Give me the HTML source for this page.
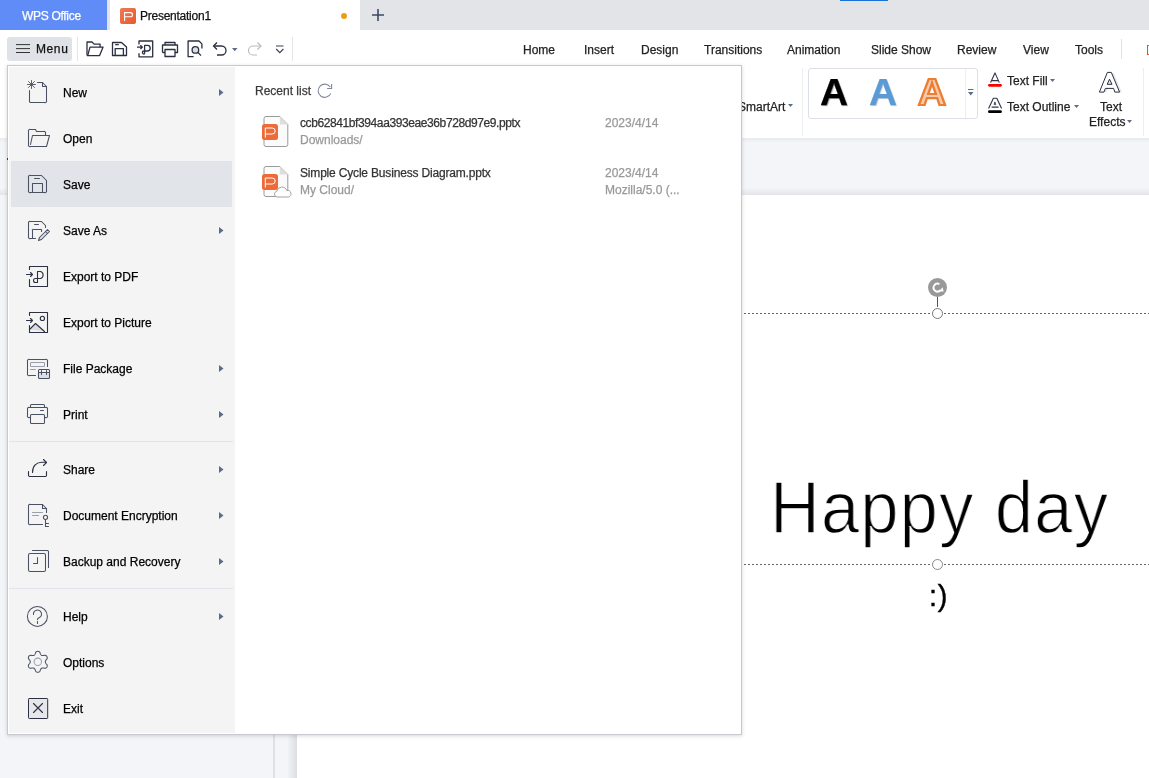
<!DOCTYPE html>
<html><head><meta charset="utf-8">
<style>
*{margin:0;padding:0;box-sizing:border-box}
html,body{width:1149px;height:778px;overflow:hidden;background:#f4f5f8;font-family:"Liberation Sans",sans-serif;font-size:12px;color:#222;position:relative}
.a{position:absolute}
.t{position:absolute;white-space:nowrap;line-height:14px;font-size:12px;will-change:transform;-webkit-text-stroke:0.25px currentColor}
svg{position:absolute;overflow:visible}
</style></head><body>
<!-- tab bar -->
<div class="a" style="left:0;top:0;width:1149px;height:30px;background:#e2e4e8"></div>
<div class="a" style="left:840px;top:0;width:48px;height:1px;background:#1a72d6"></div>
<div class="a" style="left:0;top:0;width:107px;height:30px;background:#608cf7"></div>
<div class="t" style="left:22px;top:9px;color:#fff;letter-spacing:-0.3px">WPS Office</div>
<div class="a" style="left:110px;top:0;width:250px;height:30px;background:#fff"></div>
<!-- P icon -->
<div class="a" style="left:120px;top:8px;width:16px;height:16px;background:linear-gradient(135deg,#f07a55,#e85a2c);border-radius:2px"></div>
<svg style="left:120px;top:8px" width="16" height="16"><path d="M4.6 13V4.6H10.4A2.1 2.1 0 0 1 10.4 8.8H4.6" fill="none" stroke="#fff" stroke-width="1.1"/></svg>
<div class="t" style="left:140px;top:9px;color:#111;letter-spacing:-0.25px">Presentation1</div>
<div class="a" style="left:341px;top:13px;width:6px;height:6px;border-radius:50%;background:#e8a014"></div>
<svg style="left:372px;top:9px" width="12" height="12"><path d="M6 0V12M0 6H12" stroke="#3d4a66" stroke-width="1.6"/></svg>

<!-- toolbar row -->
<div class="a" style="left:0;top:30px;width:1149px;height:108px;background:#fff"></div>


<!-- menu button -->
<div class="a" style="left:7px;top:37px;width:65px;height:24px;background:#dfe2e6;border-radius:3px"></div>
<svg style="left:16px;top:44px" width="14" height="9"><path d="M0 0.6H14M0 4.6H14M0 8.5H14" stroke="#333" stroke-width="1"/></svg>
<div class="t" style="left:36px;top:42px;color:#111;letter-spacing:0.6px">Menu</div>
<div class="a" style="left:77px;top:37px;width:1px;height:24px;background:#e3e5e9"></div>
<!-- quick icons -->
<svg style="left:80px;top:35px" width="220" height="30" viewBox="0 0 220 30" fill="none" stroke="#2b3040" stroke-width="1.3" stroke-linejoin="round">
 <!-- open -->
 <path d="M7 20.6V7H12L14.1 9.1H20.1V12.2"/>
 <path d="M7 20.6H19.6L23 12.2H10L7.7 20.6"/>
 <!-- save -->
 <path d="M32.5 7.5H41.5L46.5 12V20.5H32.5Z"/>
 <path d="M35.2 20.5V13.6H43.4V20.5M35.2 9.6H38.8"/>
 <!-- export pdf -->
 <path d="M59 9.6V6H72.7V21.8H59V18.2"/>
 <path d="M57 12.2H62.3M60.4 10.3L62.3 12.2L60.4 14.1"/>
 <path d="M64.6 18.8V10.4H67.4A2.8 2.8 0 0 1 67.4 16H63.9A1.5 1.5 0 0 0 63.9 19H64.6"/>
 <!-- print -->
 <path d="M85 10V7.5H95V10M82.5 17.5V10H97.5V17.5H95M85 17.5H82.5"/>
 <path d="M85 14.5H95V21.5H85Z"/>
 <!-- print preview -->
 <path d="M113.6 21.7H108.1V6H119L121.9 8.9V13.6"/>
 <circle cx="115.4" cy="14.9" r="3.3" fill="#dcdde0"/>
 <path d="M117.8 17.3L121 20.6"/>
 <!-- undo -->
 <path d="M134 11H141.5A4.5 4.5 0 0 1 141.5 20H137"/>
 <path d="M137 7.5L133.5 11L137 14.5"/>
</svg>
<svg style="left:232px;top:48px" width="6" height="4"><path d="M0 0H5.5L2.75 3.2Z" fill="#5c6b8a"/></svg>
<svg style="left:246px;top:39px" width="20" height="20" fill="none" stroke="#b8bbc2" stroke-width="1.2"><path d="M14.5 7H7A4.5 4.5 0 0 0 7 16H11"/><path d="M11.5 3.5L15 7L11.5 10.5"/></svg>
<svg style="left:275px;top:45px" width="10" height="9" fill="none" stroke="#3b4252" stroke-width="1.2"><path d="M1 1H8.5M1.2 4L4.8 7.6L8.4 4"/></svg>
<div class="a" style="left:292px;top:37px;width:1px;height:24px;background:#e3e5e9"></div>

<!-- ribbon tabs -->
<div class="t" style="left:523px;top:43px;color:#222">Home</div>
<div class="t" style="left:584px;top:43px;color:#222">Insert</div>
<div class="t" style="left:641px;top:43px;color:#222">Design</div>
<div class="t" style="left:704px;top:43px;color:#222">Transitions</div>
<div class="t" style="left:787px;top:43px;color:#222">Animation</div>
<div class="t" style="left:871px;top:43px;color:#222">Slide Show</div>
<div class="t" style="left:957px;top:43px;color:#222">Review</div>
<div class="t" style="left:1023px;top:43px;color:#222">View</div>
<div class="t" style="left:1075px;top:43px;color:#222">Tools</div>
<div class="a" style="left:1121px;top:39px;width:1px;height:20px;background:#dfe1e6"></div>
<div class="a" style="left:1147px;top:45px;width:2px;height:10px;border:1.5px solid #e8502a;border-right:none"></div>

<!-- ribbon content -->
<div class="t" style="left:738px;top:100px;color:#222">SmartArt</div>
<svg style="left:788px;top:104px" width="6" height="4"><path d="M0 0H5L2.5 3Z" fill="#5c6b8a"/></svg>
<div class="a" style="left:802px;top:68px;width:1px;height:68px;background:#eceef1"></div>
<div class="a" style="left:808px;top:68px;width:170px;height:51px;border:1px solid #dcdfe5;border-radius:3px;background:#fff"></div>
<div class="a" style="left:965px;top:69px;width:1px;height:49px;background:#eceef1"></div>
<svg style="left:968px;top:89px" width="6" height="8"><path d="M0 0.5H5.5" stroke="#5c6b8a" stroke-width="1"/><path d="M0 3H5.5L2.75 6.5Z" fill="#5c6b8a"/></svg>
<div class="t" style="left:820px;top:73px;transform:scaleX(1.08);transform-origin:0 0;font-size:36px;line-height:40px;font-weight:bold;color:#000;text-shadow:1px 1px 1px rgba(0,0,0,.35)">A</div>
<div class="t" style="left:869px;top:73px;transform:scaleX(1.08);transform-origin:0 0;font-size:36px;line-height:40px;font-weight:bold;color:#5b9bd5;text-shadow:1px 1px 1px rgba(0,0,0,.2)">A</div>
<div class="t" style="left:918px;top:73px;transform:scaleX(1.08);transform-origin:0 0;font-size:36px;line-height:40px;font-weight:bold;color:#f8cbad;-webkit-text-stroke:2.2px #ed7d31">A</div>
<svg style="left:984px;top:68px" width="24" height="48" fill="none" stroke="#2f3545" stroke-width="1.1" stroke-linejoin="round"><path d="M6.6 14.6L11 4.9L15.3 14.6M7.6 12.6H14.3"/><rect x="4" y="15.9" width="13.9" height="2.9" rx="1.45" fill="#f00" stroke="none"/><path d="M4.6 40.6L9.4 30.2H12.8L17.6 40.6M7.6 39.1H14.6"/><path d="M10 36.6L10.9 33.8L11.9 36.6Z" fill="#2f3545" stroke-width="0.6"/><rect x="4" y="42.3" width="13.9" height="2.8" rx="1.4" fill="#000" stroke="none"/></svg>
<div class="t" style="left:1007px;top:74px;color:#222">Text Fill</div>
<svg style="left:1050px;top:79px" width="6" height="4"><path d="M0 0H5L2.5 3Z" fill="#5c6b8a"/></svg>

<div class="t" style="left:1007px;top:100px;color:#222">Text Outline</div>
<svg style="left:1074px;top:105px" width="6" height="4"><path d="M0 0H5L2.5 3Z" fill="#5c6b8a"/></svg>
<svg style="left:1092px;top:66px" width="38" height="32" stroke-linejoin="round"><path d="M18 7H21.8L30 26.3H25.3L24.1 22.8H16L14.6 26.3H10Z" fill="#e6e7ea" stroke="none"/><path d="M15.4 6.4H19.3L27.6 26.1H22.8L21.6 22.4H13.4L11.9 26.1H7.4Z M17.5 13.2L15.2 18.3H20Z" fill="#fff" stroke="#2a3040" stroke-width="1"/></svg>
<div class="t" style="left:1100px;top:100px;color:#222">Text</div>
<div class="t" style="left:1089px;top:115px;color:#222">Effects</div>
<svg style="left:1127px;top:120px" width="6" height="4"><path d="M0 0H5L2.5 3Z" fill="#5c6b8a"/></svg>
<div class="a" style="left:1143px;top:68px;width:1px;height:68px;background:#eceef1"></div>

<!-- gray band -->
<div class="a" style="left:0;top:138px;width:1149px;height:57px;background:linear-gradient(#e9eaed 0px,#f4f5f8 5px,#f4f5f8 50px,#e3e4e7 57px)"></div>

<!-- left panel line -->
<div class="a" style="left:273px;top:195px;width:2px;height:583px;background:#dfe1e6"></div>
<div class="a" style="left:287px;top:195px;width:10px;height:583px;background:linear-gradient(90deg,#f4f5f8,#dcdde1)"></div>
<!-- slide -->
<div class="a" style="left:297px;top:195px;width:852px;height:583px;background:#fff"></div>



<!-- slide content -->
<div class="a" style="left:600px;top:313px;width:549px;height:1px;background:repeating-linear-gradient(90deg,#666 0 2px,transparent 2px 4px)"></div>
<div class="a" style="left:600px;top:564px;width:549px;height:1px;background:repeating-linear-gradient(90deg,#666 0 2px,transparent 2px 4px)"></div>
<div class="a" style="left:937px;top:297px;width:1px;height:10px;background:#555"></div>
<div class="a" style="left:931.5px;top:307.5px;width:11px;height:11px;border-radius:50%;border:1px solid #777;background:#fff"></div>
<div class="a" style="left:931.5px;top:558.5px;width:11px;height:11px;border-radius:50%;border:1px solid #888;background:#fff"></div>
<svg style="left:928px;top:278px" width="19" height="19"><circle cx="9.5" cy="9.5" r="9.5" fill="#999"/><path d="M11.4 6.2A3.9 3.9 0 1 0 12.4 12.2" fill="none" stroke="#fff" stroke-width="1.9"/><path d="M10.9 13.6L15.6 13.4L14.6 9.2Z" fill="#fff"/></svg>
<div class="t" style="left:770px;top:466px;font-size:74px;line-height:84px;color:#000;letter-spacing:1.2px;-webkit-text-stroke:1.4px #fff;transform:scaleX(0.93);transform-origin:0 0">Happy day</div>
<div class="t" style="left:929px;top:580px;font-size:29px;line-height:33px;letter-spacing:0.8px;color:#000;-webkit-text-stroke:0.4px #000">:)</div>

<!-- MENU PANEL -->
<div class="a" style="left:7px;top:65px;width:735px;height:670px;border:1px solid #c6cad0;background:#fff;box-shadow:0 1px 4px rgba(0,0,0,.16)"></div>
<div class="a" style="left:9px;top:67px;width:226px;height:666px;background:#f4f4f4"></div>
<div class="a" style="left:11px;top:161px;width:221px;height:46px;background:#e1e4e9"></div>
<div class="a" style="left:9px;top:441px;width:224px;height:1px;background:#e2e4e9"></div>
<div class="a" style="left:9px;top:588px;width:224px;height:1px;background:#e2e4e9"></div>
<svg style="left:22px;top:76px" width="34" height="30" viewBox="0 0 34 30" fill="none" stroke="#4a5162" stroke-width="1.05" stroke-linejoin="round" stroke-linecap="round"><path d="M 15.5 6.5 H 20.5 L 24.5 10.5 V 24.5 A 1.5 1.5 0 0 1 22.5 26.5 H 8.5 A 1.5 1.5 0 0 1 7.5 24.5 V 14.5"/><path d="M 20.5 6.5 V 10.5 H 24.5"/><path d="M 9.5 4.5 V 12.5 M 5.5 8.5 H 13.5 M 6.5 5.5 L 12.5 11.5 M 12.5 5.5 L 6.5 11.5" stroke-width="0.9"/></svg>
<div class="t" style="left:63px;top:86px;color:#000">New</div>
<svg style="left:219px;top:89.0px" width="5" height="7"><path d="M0 0L4.5 3.5L0 7Z" fill="#5c6b8a"/></svg>
<svg style="left:22px;top:124px" width="34" height="30" viewBox="0 0 34 30" fill="none" stroke="#4a5162" stroke-width="1.05" stroke-linejoin="round" stroke-linecap="round"><path d="M 24.5 22.5 H 8.5 A 1.5 1.5 0 0 1 6.5 20.5 V 7.5 A 1.5 1.5 0 0 1 8.5 5.5 H 13.5 L 14.5 7.5 H 21.5 A 1.5 1.5 0 0 1 23.5 8.5 V 11.5"/><path d="M 8.5 20.5 L 10.5 11.5 H 27.5 L 24.5 22.5"/></svg>
<div class="t" style="left:63px;top:132px;color:#000">Open</div>
<svg style="left:22px;top:169px" width="34" height="30" viewBox="0 0 34 30" fill="none" stroke="#4a5162" stroke-width="1.05" stroke-linejoin="round" stroke-linecap="round"><path d="M 19.5 6.5 L 24.5 11.5 V 21.5 A 1.5 1.5 0 0 1 22.5 23.5 H 8.5 A 1.5 1.5 0 0 1 6.5 21.5 V 8.5 A 1.5 1.5 0 0 1 8.5 6.5 Z"/><path d="M 12.5 9.5 H 17.5"/><path d="M 10.5 23.5 V 14.5 H 20.5 V 23.5"/></svg>
<div class="t" style="left:63px;top:178px;color:#000">Save</div>
<svg style="left:22px;top:215px" width="34" height="30" viewBox="0 0 34 30" fill="none" stroke="#4a5162" stroke-width="1.05" stroke-linejoin="round" stroke-linecap="round"><path d="M 13.5 23.5 H 8.5 A 1.5 1.5 0 0 1 6.5 21.5 V 7.5 A 1.5 1.5 0 0 1 8.5 6.5 H 19.5 L 23.5 10.5 V 12.5"/><path d="M 12.5 9.5 H 16.5"/><path d="M 10.5 23.5 V 15.5 A 0.5 0.5 0 0 1 11.5 14.5 H 18.5 A 0.5 0.5 0 0 1 19.5 15.5 V 16.5"/><path d="M 16.5 25.5 L 17.5 22.5 L 25.5 14.5 L 27.5 16.5 L 19.5 24.5 Z" fill="#dcdee2"/><path d="M 23.5 16.5 L 25.5 18.5"/></svg>
<div class="t" style="left:63px;top:224px;color:#000">Save As</div>
<svg style="left:219px;top:227.0px" width="5" height="7"><path d="M0 0L4.5 3.5L0 7Z" fill="#5c6b8a"/></svg>
<svg style="left:22px;top:262px" width="34" height="30" viewBox="0 0 34 30" fill="none" stroke="#2b3142" stroke-width="1.1" stroke-linejoin="round" stroke-linecap="round"><path d="M 7.5 7.5 V 4.5 H 25.5 V 24.5 H 7.5 V 17.5"/><path d="M 4.5 12.5 H 10.5 M 8.5 10.5 L 10.5 12.5 L 8.5 14.5"/><path d="M 15.5 20.5 V 9.5 H 18.5 A 3.65 3.65 0 0 1 18.5 16.5 H 13.5 A 1.9 1.9 0 0 0 13.5 20.5 H 15.5"/></svg>
<div class="t" style="left:63px;top:270px;color:#000">Export to PDF</div>
<svg style="left:22px;top:307px" width="34" height="30" viewBox="0 0 34 30" fill="none" stroke="#2b3142" stroke-width="1.1" stroke-linejoin="round" stroke-linecap="round"><path d="M 7.5 8.5 V 5.5 H 25.5 V 25.5 H 7.5 V 18.5"/><path d="M 4.5 13.5 H 10.5 M 8.5 11.5 L 10.5 13.5 L 8.5 15.5"/><circle cx="20.4" cy="11.4" r="2.1"/><path d="M 7.5 22.5 L 13.5 16.5 L 22.5 24.5" fill="#dcdde0"/></svg>
<div class="t" style="left:63px;top:316px;color:#000">Export to Picture</div>
<svg style="left:22px;top:354px" width="34" height="30" viewBox="0 0 34 30" fill="none" stroke="#4a5162" stroke-width="1.05" stroke-linejoin="round" stroke-linecap="round"><path d="M 13.5 21.5 H 7.5 A 1.5 1.5 0 0 1 5.5 19.5 V 7.5 A 1.5 1.5 0 0 1 7.5 5.5 H 23.5 A 1.5 1.5 0 0 1 25.5 7.5 V 12.5"/><rect x="8.5" y="8.5" width="14" height="4" rx="0.8" stroke="#9aa0ab"/><path d="M 8.5 15.5 H 13.5" stroke="#9aa0ab"/><path d="M 16.5 19.5 H 27.5 V 24.5 H 16.5 Z" fill="#dcdee2" stroke="none"/><rect x="16.5" y="15.5" width="11" height="9" rx="1"/><path d="M 16.5 18.5 H 27.5 M 19.5 16.5 V 20.5 M 24.5 16.5 V 20.5"/></svg>
<div class="t" style="left:63px;top:362px;color:#000">File Package</div>
<svg style="left:219px;top:365.0px" width="5" height="7"><path d="M0 0L4.5 3.5L0 7Z" fill="#5c6b8a"/></svg>
<svg style="left:22px;top:400px" width="34" height="30" viewBox="0 0 34 30" fill="none" stroke="#4a5162" stroke-width="1.05" stroke-linejoin="round" stroke-linecap="round"><path d="M 8.5 7.5 V 5.5 A 1 1 0 0 1 9.5 4.5 H 21.5 A 1 1 0 0 1 22.5 5.5 V 7.5"/><path d="M 8.5 17.5 H 7.5 A 1.5 1.5 0 0 1 5.5 15.5 V 8.5 A 1.5 1.5 0 0 1 7.5 7.5 H 23.5 A 1.5 1.5 0 0 1 25.5 8.5 V 15.5 A 1.5 1.5 0 0 1 23.5 17.5 H 22.5"/><path d="M 18.5 10.5 H 21.5"/><rect x="8.5" y="14.5" width="14" height="9" rx="1"/></svg>
<div class="t" style="left:63px;top:408px;color:#000">Print</div>
<svg style="left:219px;top:411.0px" width="5" height="7"><path d="M0 0L4.5 3.5L0 7Z" fill="#5c6b8a"/></svg>
<svg style="left:22px;top:455px" width="34" height="30" viewBox="0 0 34 30" fill="none" stroke="#2b3142" stroke-width="1.1" stroke-linejoin="round" stroke-linecap="round"><path d="M 6.5 16.5 V 20.5 A 1.2 1.2 0 0 0 7.5 21.5 H 23.5 A 1.2 1.2 0 0 0 24.5 20.5 V 16.5"/><path d="M 10.5 17.5 C 10.4 11 14.5 7.3 20 7.3 H 24.5"/><path d="M 21.5 4.5 L 24.5 7.5 L 21.5 10.5"/></svg>
<div class="t" style="left:63px;top:463px;color:#000">Share</div>
<svg style="left:219px;top:466.0px" width="5" height="7"><path d="M0 0L4.5 3.5L0 7Z" fill="#5c6b8a"/></svg>
<svg style="left:22px;top:500px" width="34" height="30" viewBox="0 0 34 30" fill="none" stroke="#4a5162" stroke-width="1.05" stroke-linejoin="round" stroke-linecap="round"><path d="M 20.5 24.5 H 8.5 A 1.5 1.5 0 0 1 6.5 22.5 V 5.5 A 1.5 1.5 0 0 1 8.5 4.5 H 20.5 L 24.5 8.5 V 12.5"/><path d="M 20.5 4.5 V 8.5 H 24.5"/><path d="M 10.5 12.5 H 20.5 M 10.5 15.5 H 16.5" stroke="#9aa0ab"/><circle cx="23.5" cy="17.35" r="2.1"/><path d="M 23.5 19.5 V 26.5 H 26.5 M 23.5 23.5 H 26.5"/></svg>
<div class="t" style="left:63px;top:509px;color:#000">Document Encryption</div>
<svg style="left:219px;top:512.0px" width="5" height="7"><path d="M0 0L4.5 3.5L0 7Z" fill="#5c6b8a"/></svg>
<svg style="left:22px;top:546px" width="34" height="30" viewBox="0 0 34 30" fill="none" stroke="#4a5162" stroke-width="1.05" stroke-linejoin="round" stroke-linecap="round"><rect x="6.5" y="7.5" width="17" height="18" rx="1.6"/><path d="M 10.5 4.5 H 25.5 A 1.5 1.5 0 0 1 26.5 5.5 V 21.5"/><path d="M 15.5 11.5 V 17.5 H 11.5"/></svg>
<div class="t" style="left:63px;top:555px;color:#000">Backup and Recovery</div>
<svg style="left:219px;top:558.0px" width="5" height="7"><path d="M0 0L4.5 3.5L0 7Z" fill="#5c6b8a"/></svg>
<svg style="left:22px;top:601px" width="34" height="30" viewBox="0 0 34 30" fill="none" stroke="#4a5162" stroke-width="1.05" stroke-linejoin="round" stroke-linecap="round"><circle cx="15.4" cy="15.4" r="10"/><path d="M 11.5 13.5 A 4 4 0 1 1 17.5 16.5 C 16 17 15.4 17.6 15.4 18.6"/><path d="M 15.5 20.5 V 22.5"/></svg>
<div class="t" style="left:63px;top:610px;color:#000">Help</div>
<svg style="left:219px;top:613.0px" width="5" height="7"><path d="M0 0L4.5 3.5L0 7Z" fill="#5c6b8a"/></svg>
<svg style="left:22px;top:647px" width="34" height="30" viewBox="0 0 34 30" fill="none" stroke="#4a5162" stroke-width="1.05" stroke-linejoin="round" stroke-linecap="round"><path d="M15.80 4.30 L16.17 4.33 L16.53 4.40 L16.88 4.54 L17.22 4.72 L17.53 4.96 L17.83 5.27 L18.07 5.69 L18.21 6.39 L18.40 6.80 L18.58 7.15 L18.76 7.46 L18.95 7.73 L19.13 7.96 L19.33 8.15 L19.55 8.30 L19.79 8.42 L20.05 8.50 L20.35 8.54 L20.67 8.57 L21.03 8.57 L21.43 8.55 L21.88 8.50 L22.55 8.28 L23.04 8.28 L23.45 8.38 L23.82 8.53 L24.15 8.73 L24.44 8.97 L24.69 9.25 L24.89 9.55 L25.05 9.88 L25.17 10.23 L25.23 10.60 L25.24 10.99 L25.19 11.38 L25.06 11.79 L24.82 12.21 L24.29 12.68 L24.03 13.05 L23.81 13.39 L23.64 13.70 L23.49 13.99 L23.39 14.27 L23.32 14.54 L23.30 14.80 L23.32 15.06 L23.39 15.33 L23.49 15.61 L23.64 15.90 L23.81 16.21 L24.03 16.55 L24.29 16.92 L24.82 17.39 L25.06 17.81 L25.19 18.22 L25.24 18.61 L25.23 19.00 L25.17 19.37 L25.05 19.72 L24.89 20.05 L24.69 20.35 L24.44 20.63 L24.15 20.87 L23.82 21.07 L23.45 21.22 L23.04 21.32 L22.55 21.32 L21.88 21.10 L21.43 21.05 L21.03 21.03 L20.67 21.03 L20.35 21.06 L20.05 21.10 L19.79 21.18 L19.55 21.30 L19.33 21.45 L19.13 21.64 L18.95 21.87 L18.76 22.14 L18.58 22.45 L18.40 22.80 L18.21 23.21 L18.07 23.91 L17.83 24.33 L17.53 24.64 L17.22 24.88 L16.88 25.06 L16.53 25.20 L16.17 25.27 L15.80 25.30 L15.43 25.27 L15.07 25.20 L14.72 25.06 L14.38 24.88 L14.07 24.64 L13.77 24.33 L13.53 23.91 L13.39 23.21 L13.20 22.80 L13.02 22.45 L12.84 22.14 L12.65 21.87 L12.47 21.64 L12.27 21.45 L12.05 21.30 L11.81 21.18 L11.55 21.10 L11.25 21.06 L10.93 21.03 L10.57 21.03 L10.17 21.05 L9.72 21.10 L9.05 21.32 L8.56 21.32 L8.15 21.22 L7.78 21.07 L7.45 20.87 L7.16 20.63 L6.91 20.35 L6.71 20.05 L6.55 19.72 L6.43 19.37 L6.37 19.00 L6.36 18.61 L6.41 18.22 L6.54 17.81 L6.78 17.39 L7.31 16.92 L7.57 16.55 L7.79 16.21 L7.96 15.90 L8.11 15.61 L8.21 15.33 L8.28 15.06 L8.30 14.80 L8.28 14.54 L8.21 14.27 L8.11 13.99 L7.96 13.70 L7.79 13.39 L7.57 13.05 L7.31 12.68 L6.78 12.21 L6.54 11.79 L6.41 11.38 L6.36 10.99 L6.37 10.60 L6.43 10.23 L6.55 9.88 L6.71 9.55 L6.91 9.25 L7.16 8.97 L7.45 8.73 L7.78 8.53 L8.15 8.38 L8.56 8.28 L9.05 8.28 L9.72 8.50 L10.17 8.55 L10.57 8.57 L10.93 8.57 L11.25 8.54 L11.55 8.50 L11.81 8.42 L12.05 8.30 L12.27 8.15 L12.47 7.96 L12.65 7.73 L12.84 7.46 L13.02 7.15 L13.20 6.80 L13.39 6.39 L13.53 5.69 L13.77 5.27 L14.07 4.96 L14.38 4.72 L14.72 4.54 L15.07 4.40 L15.43 4.33Z"/><circle cx="15.8" cy="14.8" r="3.7" stroke="#9aa0ab"/></svg>
<div class="t" style="left:63px;top:656px;color:#000">Options</div>
<svg style="left:22px;top:693px" width="34" height="30" viewBox="0 0 34 30" fill="none" stroke="#2b3142" stroke-width="1.1" stroke-linejoin="round" stroke-linecap="round"><rect x="6.5" y="5.5" width="19.2" height="20" rx="0.8" fill="#e6e7ea" stroke-width="1"/><path d="M 11.5 10.5 L 20.5 19.5 M 20.5 10.5 L 11.5 19.5"/></svg>
<div class="t" style="left:63px;top:702px;color:#000">Exit</div>

<div class="t" style="left:255px;top:84px;color:#3a3a3a">Recent list</div>
<svg style="left:312px;top:78px" width="26" height="24" fill="none" stroke="#7f889b" stroke-width="1.1"><path d="M18.8 15.4A6.6 6.6 0 1 1 18.2 9"/><path d="M15.1 10.5H19.6V6"/></svg>
<svg style="left:260px;top:116px" width="34" height="34"><path d="M6 0.5H19.8L27.8 8.5V28.5A2 2 0 0 1 25.8 30.5H6A2 2 0 0 1 4 28.5V2.5A2 2 0 0 1 6 0.5Z" fill="#fbfbfb" stroke="#9a9a9a" stroke-width="1"/><path d="M19.8 0.5V8.5H27.8Z" fill="#dedede"/><rect x="2" y="8" width="16" height="16" rx="2.5" fill="#ee6b39"/><path d="M5.3 21.6V12H12.2A3 3 0 0 1 12.2 18H5.3" fill="none" stroke="#fff" stroke-width="1"/></svg>
<div class="t" style="left:300px;top:115.6px;color:#333"><span style="letter-spacing:-0.4px">ccb62841bf394aa393eae36b728d97e9.pptx</span></div>
<div class="t" style="left:300px;top:133.4px;color:#999">Downloads/</div>
<div class="t" style="left:605px;top:115.6px;color:#999">2023/4/14</div>
<svg style="left:260px;top:166px" width="34" height="34"><path d="M6 0.5H19.8L27.8 8.5V28.5A2 2 0 0 1 25.8 30.5H6A2 2 0 0 1 4 28.5V2.5A2 2 0 0 1 6 0.5Z" fill="#fbfbfb" stroke="#9a9a9a" stroke-width="1"/><path d="M19.8 0.5V8.5H27.8Z" fill="#dedede"/><rect x="2" y="8" width="16" height="16" rx="2.5" fill="#ee6b39"/><path d="M5.3 21.6V12H12.2A3 3 0 0 1 12.2 18H5.3" fill="none" stroke="#fff" stroke-width="1"/><path d="M17 31A2.9 2.9 0 0 1 16.8 25.3A5.2 5.2 0 0 1 26.8 24.6A3.3 3.3 0 0 1 28.5 31Z" fill="#fff" stroke="#9a9a9a" stroke-width="0.9"/></svg>
<div class="t" style="left:300px;top:165.6px;color:#333"><span style="letter-spacing:-0.18px">Simple Cycle Business Diagram.pptx</span></div>
<div class="t" style="left:300px;top:183.4px;color:#999">My Cloud/</div>
<div class="t" style="left:605px;top:165.6px;color:#999">2023/4/14</div>
<div class="t" style="left:605px;top:183.4px;color:#999">Mozilla/5.0 (...</div>
<div class="a" style="left:7px;top:158px;width:1px;height:2px;background:#333a4a"></div>
</body></html>
